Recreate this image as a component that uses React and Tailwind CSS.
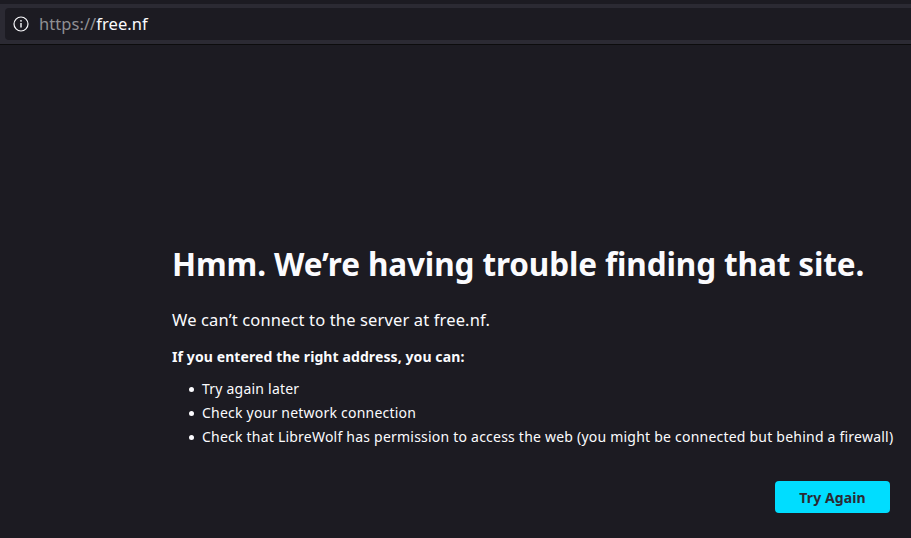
import React from 'react'

const items = [
  'Try again later',
  'Check your network connection',
  'Check that LibreWolf has permission to access the web (you might be connected but behind a firewall)',
]

export default function App() {
  return (
    <div className="w-[911px] h-[538px] overflow-hidden flex flex-col bg-[#1c1b22] text-[#fbfbfe] font-['Noto_Sans',sans-serif]">
      <div className="h-[4px] shrink-0 bg-[#1c1b22]" />
      {/* Toolbar */}
      <div className="h-[41px] shrink-0 bg-[#2b2a33] pt-[4px] pl-[5px] border-b border-[#0c0c0d]">
        <div className="h-[32px] bg-[#1c1b22] rounded-l-[4px] flex items-center pl-[8px]">
          <svg width="16" height="16" viewBox="0 0 16 16" fill="none" className="text-[#fbfbfe]">
            <circle cx="8" cy="8" r="7" stroke="currentColor" strokeWidth="1.2" />
            <circle cx="8" cy="4.8" r="0.9" fill="currentColor" />
            <path d="M8 7v4.6" stroke="currentColor" strokeWidth="1.4" />
          </svg>
          <div className="ml-[10px] text-[16.5px] leading-[20px] tracking-[0.05px]">
            <span className="text-[#8f8f93]">https://</span>free.nf
          </div>
        </div>
      </div>

      {/* Error page */}
      <div className="flex-1 pl-[172px] pt-[194px] pr-[21px]">
        <h1 className="text-[31.5px] leading-[50px] font-bold whitespace-nowrap tracking-[-0.12px]">
          Hmm. We’re having trouble finding that site.
        </h1>
        <p className="mt-[19px] text-[16.5px] leading-[24px] whitespace-nowrap tracking-[0.14px]">We can’t connect to the server at free.nf.</p>
        <p className="mt-[15px] text-[14px] leading-[20px] font-bold whitespace-nowrap tracking-[0.1px]">If you entered the right address, you can:</p>
        <ul className="mt-[12px] flex flex-col gap-[4px] pl-[17px] text-[14px] leading-[20px] whitespace-nowrap tracking-[0.22px]">
          {items.map(item => (
            <li key={item} className="flex items-center gap-[8px]">
              <span className="w-[5px] h-[5px] rounded-full bg-[#fbfbfe] shrink-0" />
              {item}
            </li>
          ))}
        </ul>
        <div className="mt-[34px] flex justify-end">
          <button className="w-[115px] h-[32px] bg-[#00ddff] rounded-[4px] text-[#2b2a33] text-[14px] font-bold tracking-[0.1px]">
            Try Again
          </button>
        </div>
      </div>
    </div>
  )
}
